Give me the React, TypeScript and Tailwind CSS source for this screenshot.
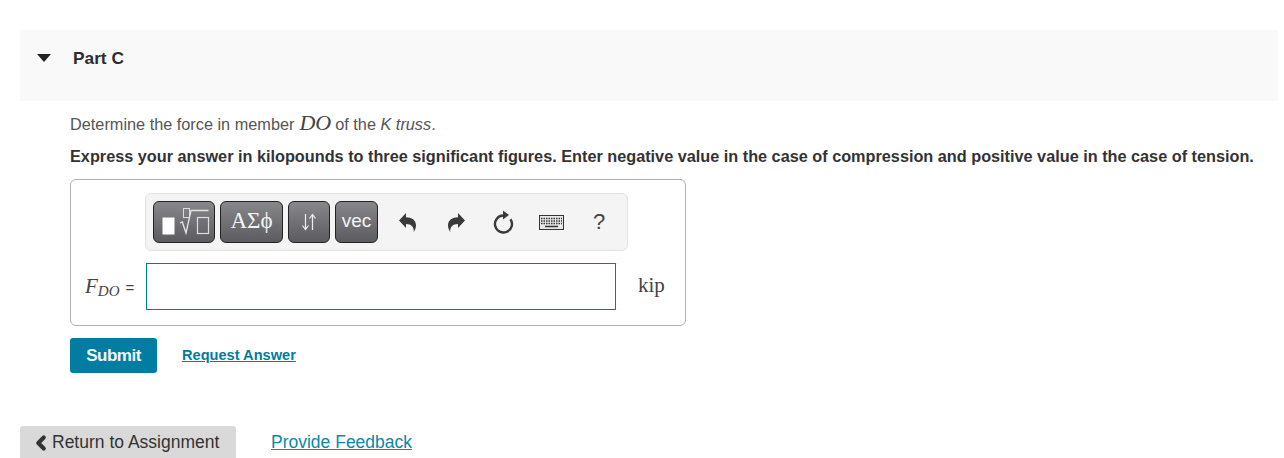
import { ChevronLeft } from 'lucide-react';

const SANS = "font-['Liberation_Sans',Arial,sans-serif]";
const SERIF = "font-['Liberation_Serif','Times_New_Roman',serif]";
const MATH_BTN =
  'flex h-[42px] items-center justify-center rounded-[6px] border border-[#222] bg-gradient-to-b from-[#88888c] to-[#5c5c60] text-[#f4f4f4]';

function TemplateIcon() {
  return (
    <svg width="54" height="30" viewBox="0 0 54 30" fill="none">
      <rect x="5.500" y="10.500" width="12" height="17" fill="#fff" />
      <rect x="26.500" y="1.500" width="6" height="9" stroke="#ddd" strokeWidth="1" />
      <path d="M23 16l2.300 -1 3.700 11 5 -22.500h17.500" stroke="#e4e4e4" strokeWidth="1.300" />
      <rect x="40.500" y="10.500" width="11" height="16" stroke="#ddd" strokeWidth="1.200" />
    </svg>
  );
}

function ArrowsIcon() {
  return (
    <svg width="16" height="20" viewBox="0 0 16 20" fill="none" stroke="#eee" strokeWidth="1.200">
      <path d="M4.500 2v15M1.500 13.500l3 4 3-4" />
      <path d="M11.500 18V3M8.500 6.500l3-4 3 4" />
    </svg>
  );
}

function UndoIcon({ flip }: { flip?: boolean }) {
  return (
    <svg width="17" height="19" viewBox="0 0 17 19" className={flip ? '-scale-x-100' : ''}>
      <path d="M0 7.500L7 0v4.300c5.500 0 10 2.700 10 8 0 3-1 5-2.300 6.700 .6-4.500-2.200-8-7.700-8V15z" fill="#3a3a3a" />
    </svg>
  );
}

function ResetIcon() {
  return (
    <svg width="22" height="24" viewBox="0 0 22 24" fill="none">
      <path d="M10 5.500a8.500 8.500 0 1 0 7.500 3.700" stroke="#3a3a3a" strokeWidth="2.400" />
      <path d="M10 0.500l6 4.500-6 4.500z" fill="#3a3a3a" />
    </svg>
  );
}

function KeyboardIcon() {
  return (
    <svg width="25" height="15" viewBox="0 0 25 15" fill="none">
      <rect x="0.500" y="0.500" width="24" height="14" fill="#e8e8e8" stroke="#333" />
      <path d="M2 3.500h21M2 6h21M2 8.500h21" stroke="#333" strokeWidth="1.300" strokeDasharray="1.500 1" />
      <path d="M6 11.500h13" stroke="#333" strokeWidth="1.500" />
    </svg>
  );
}

export default function App() {
  return (
    <div className={`${SANS} h-[458px] w-[1284px] overflow-hidden bg-white pl-5 pr-[6px] pt-[30px] text-[#333]`}>
      <div className="flex h-[71px] items-start bg-[#f9f9f9] pl-[17px] pt-[19px]">
        <svg width="14" height="8" viewBox="0 0 14 8" className="mt-[5px]">
          <path d="M0 0h14L7 8z" fill="#222" />
        </svg>
        <span className="ml-[22px] text-[17.300px] font-bold leading-[18px] text-[#2d2d2d]">Part C</span>
      </div>

      <div className="pl-[50px]">
        <p className="mt-[10px] flex h-[26px] items-center text-[16.300px] text-[#555]">
          Determine the force in member
          <span className={`${SERIF} ml-[5px] mr-[4px] pb-[3px] text-[22px] italic text-[#444]`}>DO</span>
          of the&nbsp;<i>K truss</i>.
        </p>
        <p className="mt-[9px] whitespace-nowrap text-[16.250px] font-bold leading-[20px] text-[#333]">
          Express your answer in kilopounds to three significant figures. Enter negative value in the case of compression and positive value in the case of tension.
        </p>

        <div className="mt-[13px] h-[147px] w-[616px] rounded-[6px] border border-[#b0b0b0] pl-[74px] pt-[13px]">
          <div className="flex h-[58px] w-[483px] items-center rounded-[6px] border border-[#e2e2e2] bg-[#f4f4f4] pl-[7px]">
            <div className={`${MATH_BTN} w-[62px]`}>
              <TemplateIcon />
            </div>
            <div className={`${MATH_BTN} ${SERIF} ml-[5px] w-[63px] pb-[1px] text-[23px]`}>ΑΣϕ</div>
            <div className={`${MATH_BTN} ml-[5px] w-[42px]`}>
              <ArrowsIcon />
            </div>
            <div className={`${MATH_BTN} ml-[5px] w-[43px] pb-[2px] text-[19px]`}>vec</div>
            <div className="ml-[21px]">
              <UndoIcon />
            </div>
            <div className="ml-[32px]">
              <UndoIcon flip />
            </div>
            <div className="ml-[28px]">
              <ResetIcon />
            </div>
            <div className="ml-[24px]">
              <KeyboardIcon />
            </div>
            <span className="ml-[29px] pb-[1px] text-[22px] leading-none text-[#444]">?</span>
          </div>

          <div className="relative mt-[12px] flex items-center">
            <div className={`${SERIF} absolute left-[-60px] top-[8px] flex items-baseline text-[#444]`}>
              <i className="text-[21px]">F</i>
              <i className="relative top-[3px] text-[15px] font-normal">DO</i>
              <span className={`${SANS} ml-[6px] text-[15px]`}>=</span>
            </div>
            <input className="ml-[1px] h-[47px] w-[470px] border border-[#007c9f] bg-white outline-none" />
            <span className={`${SERIF} ml-[22px] pb-[2px] text-[21px] text-[#444]`}>kip</span>
          </div>
        </div>

        <div className="mt-[12px] flex items-center">
          <button className="h-[35px] w-[87px] rounded-[3px] bg-[#007da0] text-[17px] font-bold tracking-[-0.500px] text-[#f2f8fa]">
            Submit
          </button>
          <a className="ml-[25px] text-[14.600px] font-bold text-[#007c9f] underline">Request Answer</a>
        </div>
      </div>

      <div className="mt-[53px] flex items-start">
        <button className="flex h-[32px] w-[216px] items-center rounded-t-[3px] bg-[#d9d9d9] pl-[12px] pt-[1px] text-[17.500px] text-[#333]">
          <ChevronLeft size={22} strokeWidth={4.500} className="ml-[-2px]" />
          Return to Assignment
        </button>
        <a className="ml-[35px] mt-[3px] text-[17.500px] text-[#0e86a8] underline">Provide Feedback</a>
      </div>
    </div>
  );
}
